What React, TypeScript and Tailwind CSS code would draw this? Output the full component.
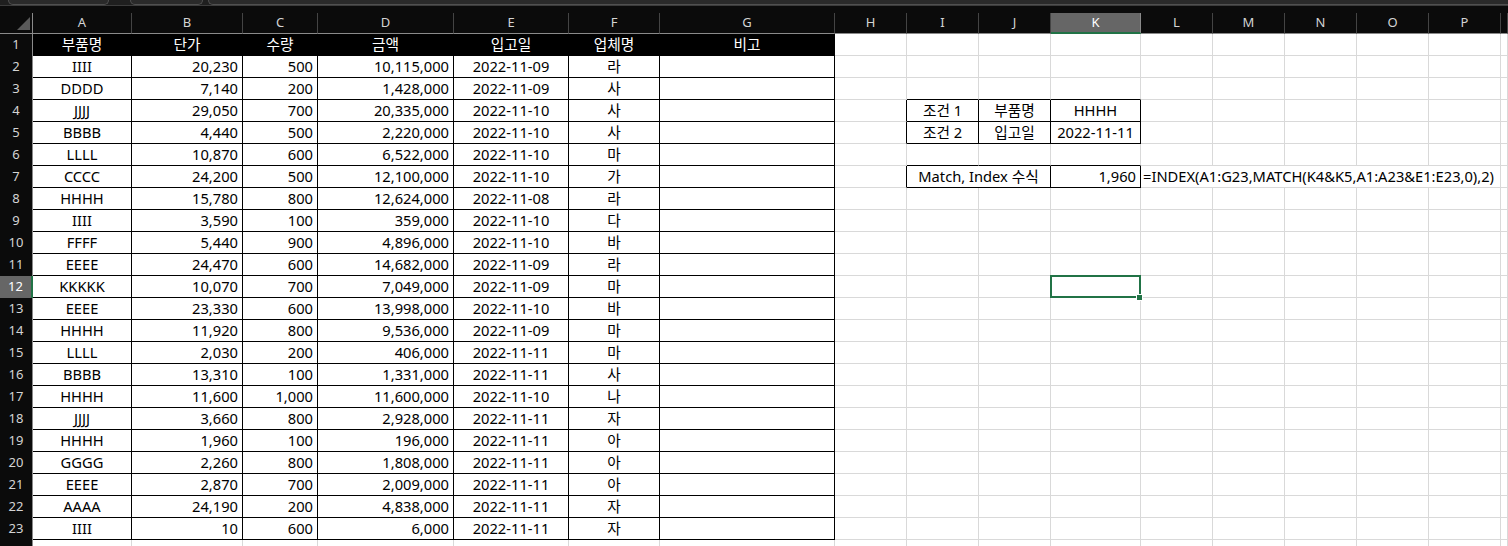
import React from 'react';

type Align = 'l' | 'c' | 'r';
interface CellData {
  text: string;
  align: Align;
}

// last column (Q) is only a sliver, no label shown
const letters = ['A', 'B', 'C', 'D', 'E', 'F', 'G', 'H', 'I', 'J', 'K', 'L', 'M', 'N', 'O', 'P', ''];

const heads = ['부품명', '단가', '수량', '금액', '입고일', '업체명', '비고'];

// A..F of rows 2-23
const rows: string[][] = [
  ['IIII', '20,230', '500', '10,115,000', '2022-11-09', '라'],
  ['DDDD', '7,140', '200', '1,428,000', '2022-11-09', '사'],
  ['JJJJ', '29,050', '700', '20,335,000', '2022-11-10', '사'],
  ['BBBB', '4,440', '500', '2,220,000', '2022-11-10', '사'],
  ['LLLL', '10,870', '600', '6,522,000', '2022-11-10', '마'],
  ['CCCC', '24,200', '500', '12,100,000', '2022-11-10', '가'],
  ['HHHH', '15,780', '800', '12,624,000', '2022-11-08', '라'],
  ['IIII', '3,590', '100', '359,000', '2022-11-10', '다'],
  ['FFFF', '5,440', '900', '4,896,000', '2022-11-10', '바'],
  ['EEEE', '24,470', '600', '14,682,000', '2022-11-09', '라'],
  ['KKKKK', '10,070', '700', '7,049,000', '2022-11-09', '마'],
  ['EEEE', '23,330', '600', '13,998,000', '2022-11-10', '바'],
  ['HHHH', '11,920', '800', '9,536,000', '2022-11-09', '마'],
  ['LLLL', '2,030', '200', '406,000', '2022-11-11', '마'],
  ['BBBB', '13,310', '100', '1,331,000', '2022-11-11', '사'],
  ['HHHH', '11,600', '1,000', '11,600,000', '2022-11-10', '나'],
  ['JJJJ', '3,660', '800', '2,928,000', '2022-11-11', '자'],
  ['HHHH', '1,960', '100', '196,000', '2022-11-11', '아'],
  ['GGGG', '2,260', '800', '1,808,000', '2022-11-11', '아'],
  ['EEEE', '2,870', '700', '2,009,000', '2022-11-11', '아'],
  ['AAAA', '24,190', '200', '4,838,000', '2022-11-11', '자'],
  ['IIII', '10', '600', '6,000', '2022-11-11', '자'],
];

const dataAlign: Align[] = ['c', 'r', 'r', 'r', 'c', 'c'];

const boxed = (r: number, c: number) =>
  (r >= 1 && r <= 23 && c >= 0 && c <= 6) ||
  (r >= 4 && r <= 5 && c >= 8 && c <= 10) ||
  (r === 7 && c >= 8 && c <= 10);

function getCell(r: number, c: number): CellData | null {
  if (r === 1 && c < 7) return { text: heads[c], align: 'c' };
  if (r >= 2 && r <= 23 && c < 6) return { text: rows[r - 2][c], align: dataAlign[c] };
  if (r === 4) {
    if (c === 8) return { text: '조건 1', align: 'c' };
    if (c === 9) return { text: '부품명', align: 'c' };
    if (c === 10) return { text: 'HHHH', align: 'c' };
  }
  if (r === 5) {
    if (c === 8) return { text: '조건 2', align: 'c' };
    if (c === 9) return { text: '입고일', align: 'c' };
    if (c === 10) return { text: '2022-11-11', align: 'c' };
  }
  if (r === 7) {
    if (c === 8) return { text: 'Match, Index 수식', align: 'c' };
    if (c === 10) return { text: '1,960', align: 'r' };
    if (c === 11) return { text: '=INDEX(A1:G23,MATCH(K4&K5,A1:A23&E1:E23,0),2)', align: 'l' };
  }
  return null;
}

const alignCls = (a: Align) =>
  a === 'c' ? 'justify-center' : a === 'r' ? 'justify-end pr-[4px]' : 'justify-start pl-[2px]';

const App: React.FC = () => {
  const cells: React.ReactNode[] = [];

  for (let r = 1; r <= 24; r++) {
    const sel = r === 12;
    cells.push(
      <div
        key={`h${r}`}
        className={
          sel
            ? 'h-[22px] flex items-center justify-center bg-[#666666] text-white text-[13px] border-r-2 border-r-[#217346]'
            : 'h-[22px] flex items-center justify-center bg-[#0b0b0b] text-[#d4d4d4] text-[13px] border-r border-r-[#8a8a8a]'
        }
      >
        {r < 24 ? r : ''}
      </div>
    );

    let c = 0;
    while (c < 17) {
      let span = 1;
      if (r === 7 && c === 8) span = 2;
      if (r === 7 && c === 11) span = 5;
      const last = c + span - 1;
      const rightBlack = boxed(r, last) || boxed(r, last + 1);
      let bottomBlack = false;
      for (let k = c; k <= last; k++) if (boxed(r, k) || boxed(r + 1, k)) bottomBlack = true;
      const head = r === 1 && c < 7;
      const data = getCell(r, c);

      cells.push(
        <div
          key={`${r}-${c}`}
          className={[
            'h-[22px] flex items-center whitespace-nowrap text-[14.7px] relative',
            span === 2 ? 'col-span-2' : span === 5 ? 'col-span-5' : '',
            head ? 'bg-black text-white' : 'bg-white text-black',
            'border-r border-b',
            rightBlack ? 'border-r-black' : 'border-r-[#d9d9d9]',
            bottomBlack ? 'border-b-black' : 'border-b-[#d9d9d9]',
            data ? alignCls(data.align) : '',
          ].join(' ')}
        >
          {data?.text}
          {r === 12 && c === 10 && (
            <div className="absolute top-[-1px] left-[-1px] right-[-1px] bottom-[-1px] border-2 border-[#217346] z-10">
              <div className="absolute right-[-4px] bottom-[-5px] w-[7px] h-[7px] bg-[#217346] border border-white" />
            </div>
          )}
        </div>
      );
      c += span;
    }
  }

  return (
    <div className="w-[1508px] h-[546px] overflow-hidden bg-white font-['Noto_Sans','Noto_Sans_CJK_KR',sans-serif]">
      {/* toolbar remnant */}
      <div className="h-[6px] bg-[#1f1f1f] border-b border-b-[#3c3c3c] flex gap-[21px] pl-[8px]">
        <div className="w-[101px] h-[5px] bg-[#2a2a2a] border-x border-b border-[#505050] rounded-b-[5px]" />
        <div className="flex gap-[5px] flex-1">
          <div className="w-[73px] h-[5px] bg-[#2a2a2a] border-x border-b border-[#505050] rounded-b-[5px]" />
          <div className="flex-1 h-[5px] bg-[#2a2a2a] border-l border-b border-[#505050] rounded-bl-[5px]" />
        </div>
      </div>
      <div className="h-[7px] bg-[#0b0b0b]" />

      <div className="grid grid-cols-[33px_99px_111px_75px_136px_115px_91px_175px_72px_72px_72px_90px_72px_72px_72px_72px_72px_1fr]">
        {/* column headers */}
        <div className="h-[21px] bg-[#0b0b0b] border-b border-b-[#8a8a8a] border-r border-r-[#8a8a8a] relative">
          <svg className="absolute left-[17px] top-[4px]" width="13" height="13" viewBox="0 0 13 13">
            <polygon points="13,0 13,13 0,13" fill="#5a5a5a" />
          </svg>
        </div>
        {letters.map((l, i) => (
          <div
            key={i}
            className={
              l === 'K'
                ? 'h-[21px] flex items-center justify-center bg-[#666666] text-white text-[13px] border-r border-r-[#8a8a8a] border-b-2 border-b-[#217346]'
                : 'h-[21px] flex items-center justify-center bg-[#0b0b0b] text-[#d4d4d4] text-[13px] border-r border-r-[#444444] border-b border-b-[#8a8a8a]'
            }
          >
            {l}
          </div>
        ))}
        {cells}
      </div>
    </div>
  );
};

export default App;
